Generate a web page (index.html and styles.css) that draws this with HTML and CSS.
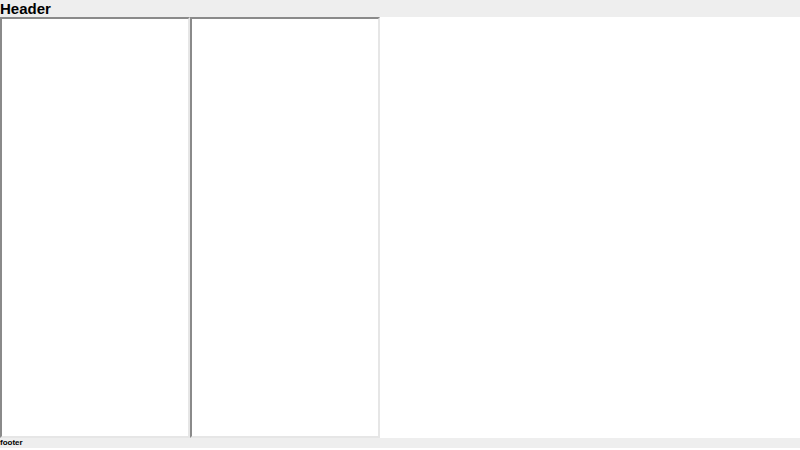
FILE: index.html
```html
<!DOCTYPE html>
<html>
<head>
<meta charset="utf-8">
<link rel="stylesheet" href="styles.css">
</head>
<body>
<div class="page">
  <header class="header"><h1 class="title">Header</h1></header>
  <main class="main">
    <div class="frame"></div>
    <div class="frame"></div>
  </main>
  <footer class="footer">footer</footer>
</div>
</body>
</html>
```
FILE: styles.css
```css
html, body {
  margin: 0;
  padding: 0;
  background: #fff;
  font-family: "Liberation Sans", Arial, sans-serif;
}
.page {
  display: flex;
  flex-direction: column;
  width: 800px;
}
.header {
  background: #eeeeee;
  height: 17px;
}
.title {
  margin: 0;
  font-size: 15px;
  font-weight: bold;
  line-height: 17px;
  color: #000;
}
.main {
  display: flex;
  height: 421px;
}
.frame {
  width: 190px;
  height: 421px;
  box-sizing: border-box;
  border-style: solid;
  border-width: 2px;
  border-top-color: #8a8a8a;
  border-left-color: #8a8a8a;
  border-bottom-color: #e6e6e6;
  border-right-color: #e6e6e6;
  background: #fff;
}
.footer {
  background: #eeeeee;
  font-size: 8px;
  font-weight: bold;
  line-height: 10px;
  height: 10px;
  color: #000;
}
```
